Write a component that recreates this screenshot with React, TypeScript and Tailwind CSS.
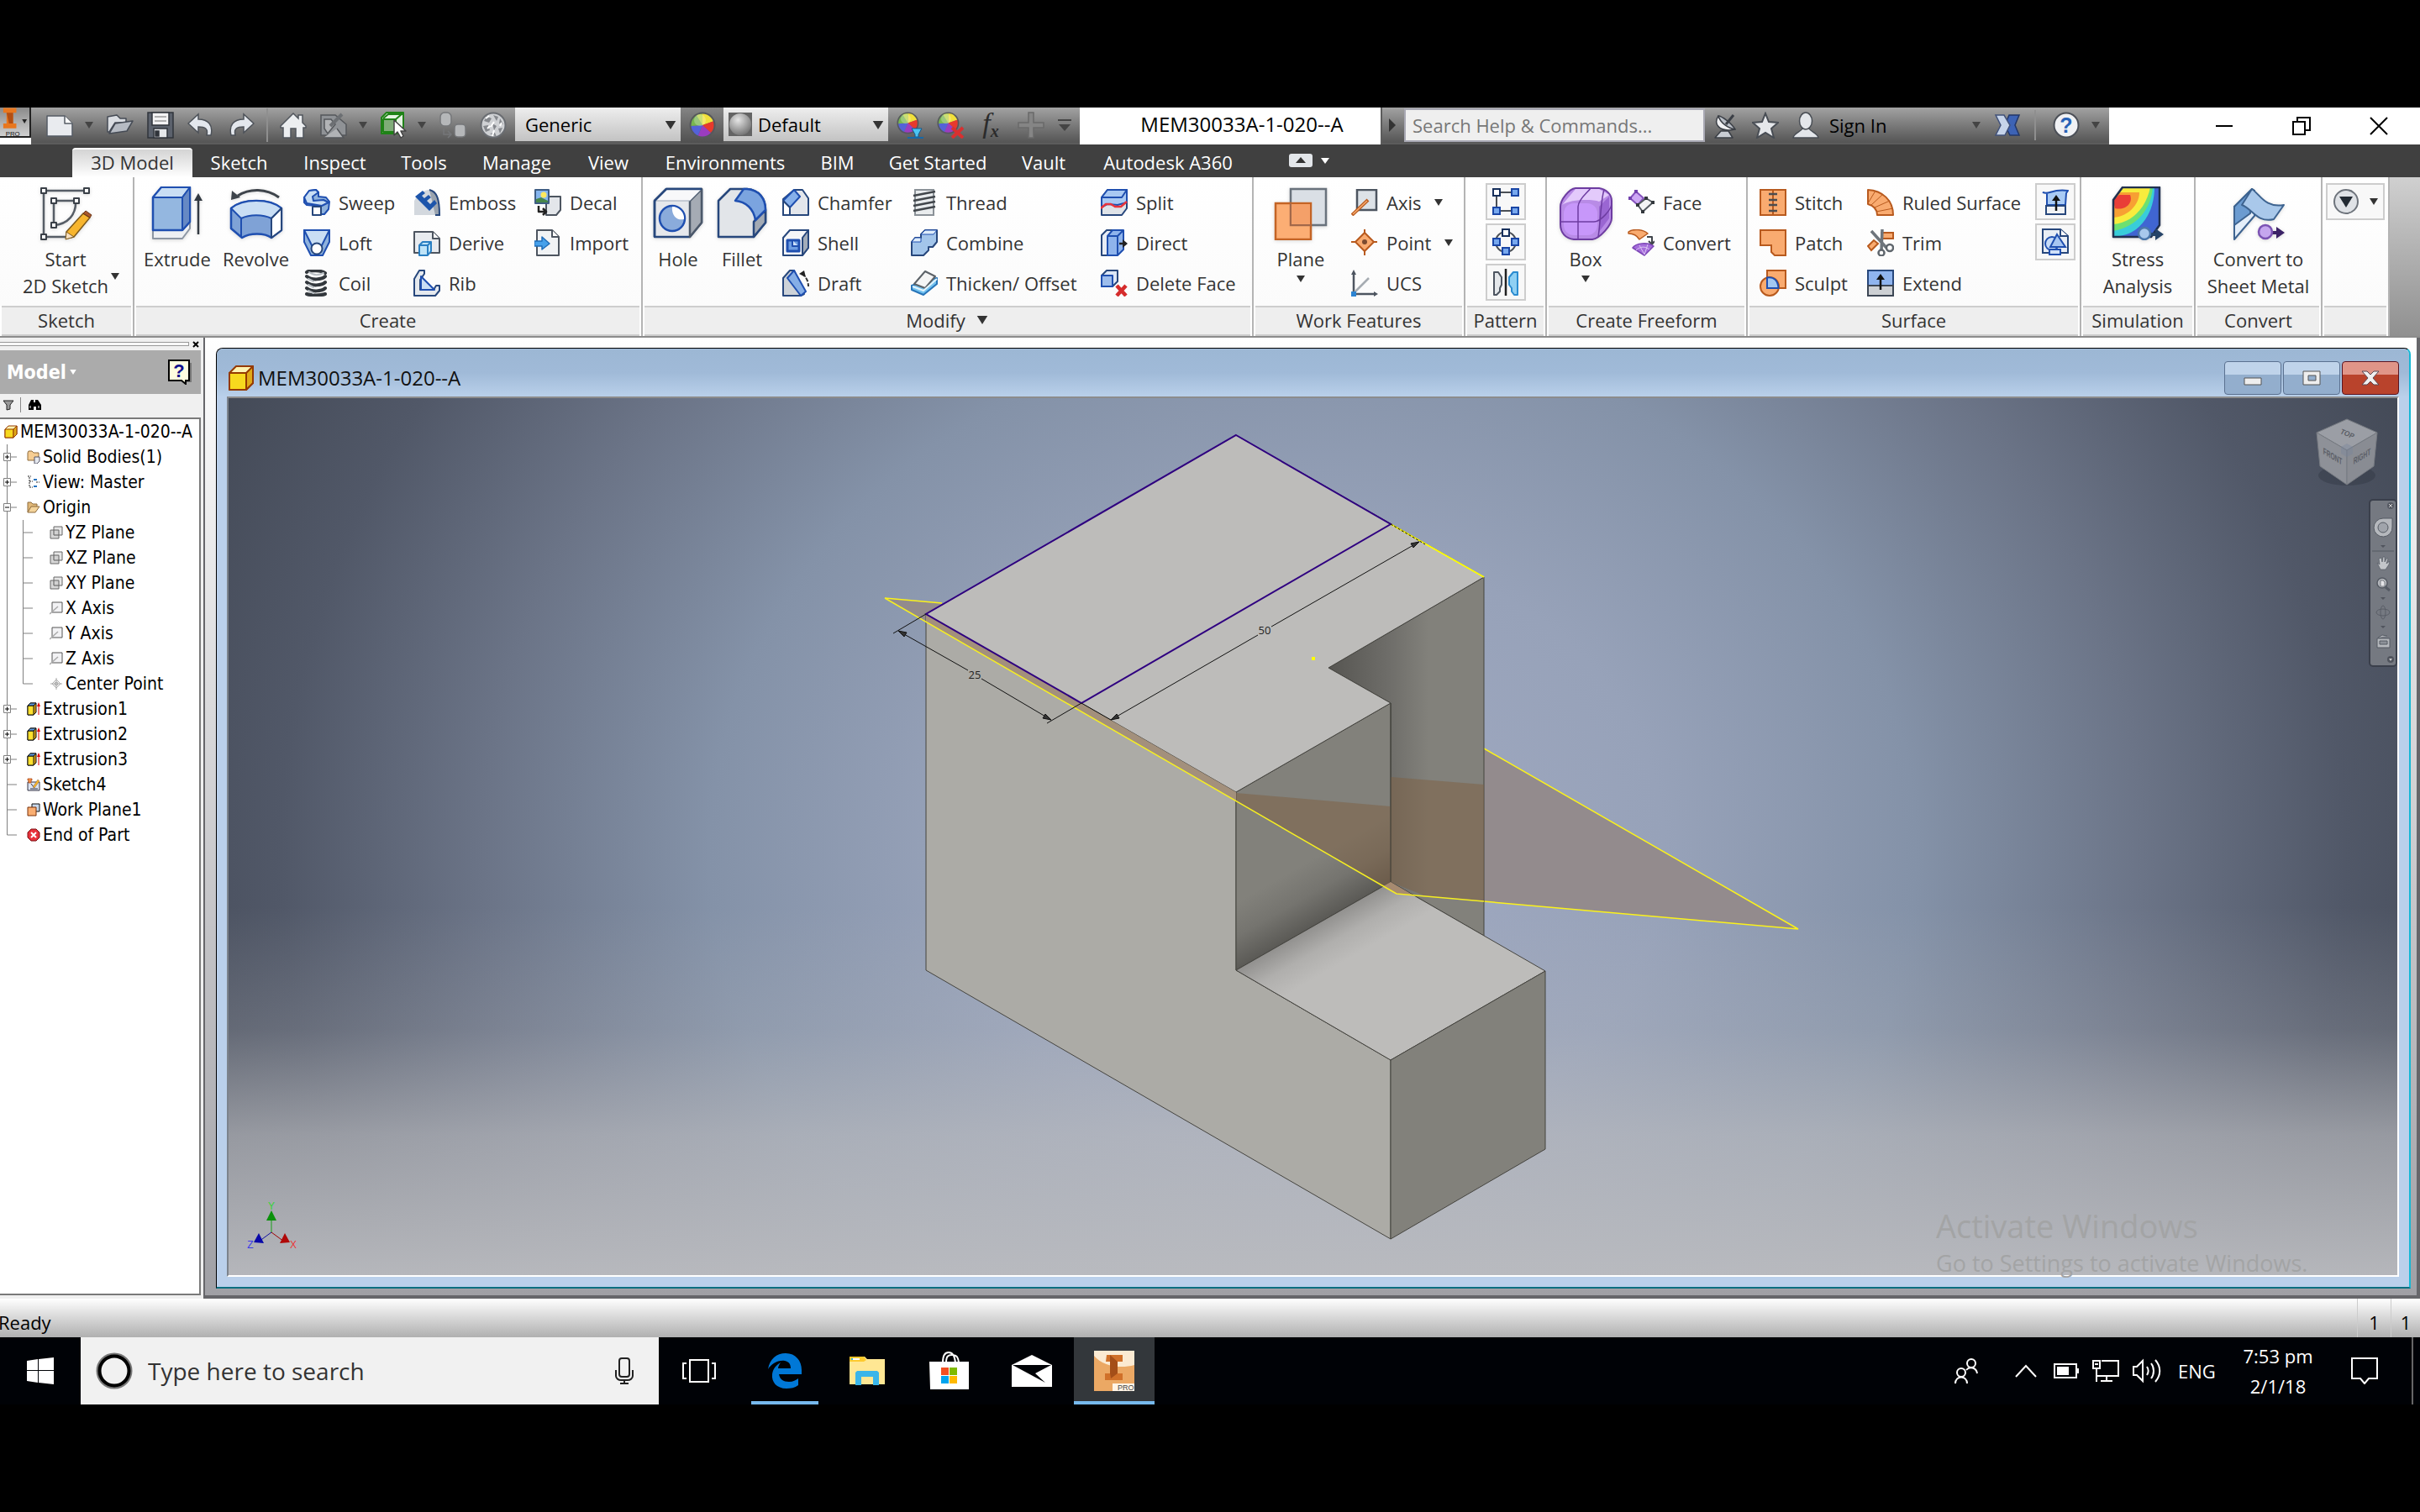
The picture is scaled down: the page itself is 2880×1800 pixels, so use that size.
import type { ReactNode } from "react";

const NAVY = "#27477c";
const BLUE = "#1f4fb0";
const SKY = "#c9def4";
const STEEL = "#8fb2dc";
const GREY = "#4d5560";
const RUST = "#b85a1e";
const PEACH = "#f9ab70";

// Small ribbon glyphs, all on a 32 x 32 grid
const glyphs: Record<string, ReactNode> = {
  sweep: (
    <g stroke={BLUE} strokeWidth="2" strokeLinejoin="round">
      <path d="M1 10 7 2 15 1 18 4 18 9 27 10 31 15 30 24 25 30 13 30 11 24 14 20 4 19 1 16Z" fill={STEEL} />
      <path d="M1 10 7 2 15 1 18 4 11 9 12 14 24 13 30 16 22 20 4 17Z" fill={SKY} />
      <path d="M11 21H21V31H11Z" fill="#fff" stroke={NAVY} />
    </g>
  ),
  loft: (
    <g stroke={BLUE} strokeWidth="2" strokeLinejoin="round">
      <path d="M1 1H31V15L23 31H9L1 15Z" fill={STEEL} />
      <path d="M1 1H31L22 19H10Z" fill={SKY} />
      <circle cx="16" cy="23" r="6.5" fill="#fff" stroke={NAVY} />
    </g>
  ),
  coil: (
    <g fill="none" stroke="#33383d" strokeWidth="4" strokeLinecap="round">
      <path d="M4 3C8 0 22 1 26 4M4 8C10 13 22 12 26 8M4 15C10 20 22 19 26 15M4 22C10 27 22 26 26 22M4 29C10 31 20 31 26 29" />
      <path d="M7 3C12 7 18 7 24 4M6 11 12 14M6 18 12 21M6 25 12 28" stroke="#b9bfc4" strokeWidth="2" />
    </g>
  ),
  emboss: (
    <g>
      <path d="M1 31V14C6 5 14 0 22 1 29 4 31 12 31 31Z" fill="#d3d8de" />
      <path d="M19 1C28 3 31 12 31 31H26" fill="#9aa3ae" stroke={NAVY} strokeWidth="2" />
      <path d="M2 9 11 2 14 5 10 8 13 11 18 7 21 10 16 14 20 18 25 13 28 17 19 26Z" fill="#1d55ab" />
    </g>
  ),
  derive: (
    <g strokeLinejoin="round" strokeWidth="2">
      <path d="M1 3H23L31 11V28H1Z" fill="#e8ebef" stroke={GREY} />
      <path d="M23 3V11H31" fill="#fff" stroke={GREY} />
      <path d="M7 19 11 15H21V26L17 31H7Z" fill="#bfe4f8" stroke="#2a7fc2" />
      <path d="M7 19H17V31M17 19 21 15" fill="none" stroke="#2a7fc2" />
    </g>
  ),
  rib: (
    <g stroke={NAVY} strokeWidth="2" strokeLinejoin="round">
      <path d="M1 11 7 1 13 1V5L8 12V24H24L27 19H31V25L26 31H1Z" fill="#e5e9ee" />
      <path d="M9 8 25 24H9Z" fill={SKY} stroke={BLUE} />
    </g>
  ),
  decal: (
    <g strokeWidth="2" strokeLinejoin="round">
      <path d="M14 13 18 9H31V25L26 31H14Z" fill="#e3e6ea" stroke={GREY} />
      <path d="M1 1H17V17H1Z" fill="#85b5ee" stroke="#3e5d84" />
      <path d="M2 12 8 10 16 14V16H2Z" fill="#47864b" />
      <circle cx="11" cy="7" r="3.5" fill="#ffe95c" />
      <path d="M5 20V27H13M10 23 14 27 10 31" fill="none" stroke="#222" strokeWidth="2.5" />
    </g>
  ),
  import: (
    <g strokeWidth="2" strokeLinejoin="round">
      <path d="M3 1H21L29 9V31H3Z" fill="#f1f3f5" stroke={GREY} />
      <path d="M21 1V9H29" fill="#fff" stroke={GREY} />
      <path d="M0 14H9V9L18 17 9 24V20H0Z" fill="#46a0ea" stroke="#1f6cb8" strokeWidth="1.5" />
    </g>
  ),
  chamfer: (
    <g strokeWidth="2" strokeLinejoin="round">
      <path d="M1 12 14 1H24L31 11V31H1Z" fill="#e3e6eb" stroke={NAVY} />
      <path d="M1 14 14 1 21 9 9 22Z" fill="#86b0ea" stroke={BLUE} />
      <path d="M1 14 9 22V31H1Z" fill="#fff" stroke={NAVY} />
    </g>
  ),
  shell: (
    <g strokeWidth="2" strokeLinejoin="round">
      <path d="M1 10 9 1H31V22L24 31H1Z" fill="#f5f6f8" stroke={NAVY} />
      <path d="M24 10 31 1V22L24 31Z" fill="#a2acb9" stroke={NAVY} />
      <path d="M6 13H20V26H6Z" fill="#6d9de2" stroke={BLUE} strokeWidth="3" />
      <path d="M12 13V20H19" fill="#cfe2fa" stroke={BLUE} />
    </g>
  ),
  draft: (
    <g strokeWidth="2" strokeLinejoin="round">
      <path d="M1 10 9 1H14L26 29 22 31H1Z" fill="#cdd2d8" stroke={NAVY} />
      <path d="M6 10 14 1 28 26 22 31Z" fill="#86aee6" stroke={BLUE} />
      <path d="M23 5C28 8 31 13 31 20" fill="none" stroke="#333" strokeDasharray="5 2" />
      <path d="M20 5 26 1 28 9Z" fill="#222" />
    </g>
  ),
  thread: (
    <g>
      <path d="M5 1H27V31H5Z" fill="#e9ecee" stroke="#8b9298" strokeWidth="2" />
      <path d="M3 8 29 3M3 14 29 9M3 20 29 15M3 26 29 21" stroke="#42474c" strokeWidth="2.5" />
    </g>
  ),
  combine: (
    <g strokeWidth="2" strokeLinejoin="round">
      <path d="M1 15 5 10H12V6L17 1H31V15L26 21H21V25L15 31H1Z" fill="#a3c5ea" stroke={NAVY} />
      <path d="M12 6 17 1H31L27 6ZM1 15 5 10H12V15Z" fill="#deecfa" stroke={BLUE} strokeWidth="1" />
    </g>
  ),
  thicken: (
    <g strokeLinejoin="round">
      <path d="M1 19 17 13 31 10V17L15 30 1 24Z" fill="#73c2f0" stroke="#2774b8" strokeWidth="2" />
      <path d="M4 17 17 2 29 8 17 22Z" fill="#f5f5f5" stroke="#5c6268" strokeWidth="2" />
      <path d="M2 20 15 25 31 11" fill="none" stroke="#e5f4fc" strokeWidth="2" />
    </g>
  ),
  split: (
    <g strokeWidth="2" strokeLinejoin="round">
      <path d="M1 10 8 1H31V23L25 31H1Z" fill="#dfe3e8" stroke={NAVY} />
      <path d="M1 10 8 1H31V16L20 19 8 18 1 22Z" fill="#a9c9f2" stroke={BLUE} />
      <path d="M1 10H25L31 1" fill="none" stroke={BLUE} />
      <path d="M0 23 6 18 12 18 17 21 24 21 31 15" fill="none" stroke="#e8343c" strokeWidth="2.5" />
    </g>
  ),
  direct: (
    <g strokeWidth="2" strokeLinejoin="round">
      <path d="M1 7 7 1H14V31H1Z" fill="#e7ecf4" stroke={NAVY} />
      <path d="M8 8 14 1H27V24L20 31H8Z" fill="#8fb4ec" stroke={BLUE} />
      <path d="M8 8H20L27 1M20 8V31" fill="none" stroke={BLUE} />
      <path d="M22 17H30" stroke="#222" strokeWidth="2.5" />
      <path d="M26 12 32 17 26 22Z" fill="#222" />
    </g>
  ),
  deleteFace: (
    <g strokeLinejoin="round">
      <path d="M1 7 7 1H20V14L14 20H1Z" fill="#dbe6f5" stroke={NAVY} strokeWidth="2" />
      <path d="M1 7H14V20H1Z" fill="#9dbdec" stroke={BLUE} strokeWidth="2" />
      <path d="M19 19 30 31M30 19 19 31" stroke="#d52c2c" strokeWidth="4.5" />
    </g>
  ),
  axis: (
    <g>
      <path d="M7 1H30V25H7Z" fill="#dde2e7" stroke={GREY} strokeWidth="2.5" />
      <path d="M1 31 20 13" stroke={RUST} strokeWidth="4" />
      <path d="M2 30 19 14" stroke={PEACH} strokeWidth="1.5" />
    </g>
  ),
  point: (
    <g>
      <path d="M16 0V31M0 15H31" stroke={RUST} strokeWidth="2" />
      <path d="M16 4 27 15 16 26 5 15Z" fill={PEACH} stroke={RUST} strokeWidth="2" />
      <circle cx="16" cy="15" r="3" fill="#7b4b30" />
    </g>
  ),
  ucs: (
    <g fill="none" stroke={GREY} strokeWidth="2.5">
      <path d="M3 28V4M4 29H29" />
      <path d="M4 27 21 10" stroke="#a6acb2" />
      <path d="M0 6 3 0 6 6ZM27 26 32 29 27 32Z" fill={GREY} stroke="none" />
      <path d="M0 26H6V32H0Z" fill="#2c84d2" stroke="none" />
    </g>
  ),
  rectPattern: (
    <g>
      <path d="M5 5H27M5 5V27M5 27H27" stroke="#4a4f55" strokeWidth="2" fill="none" />
      <path d="M1 1H9V9H1Z" fill="#fff" stroke="#17305c" strokeWidth="2" />
      <path d="M23 1H31V9H23ZM1 23H9V31H1ZM23 23H31V31H23Z" fill="#77a8ee" stroke="#1a46a6" strokeWidth="2" />
    </g>
  ),
  circPattern: (
    <g>
      <circle cx="16" cy="16" r="12" fill="none" stroke="#4a4f55" strokeWidth="2" />
      <path d="M12 1H20V9H12Z" fill="#fff" stroke="#17305c" strokeWidth="2" />
      <path d="M1 12H9V20H1ZM23 12H31V20H23ZM12 23H20V31H12Z" fill="#77a8ee" stroke="#1a46a6" strokeWidth="2" />
    </g>
  ),
  mirror: (
    <g strokeLinejoin="round" strokeWidth="2">
      <path d="M2 4H7L11 10V19L9 23V27L5 31H2Z" fill="#e4e7ea" stroke={GREY} />
      <path d="M30 4H25L20 10V19L23 23V27L26 31H30Z" fill="#8fd0f3" stroke="#2b8cd0" />
      <path d="M16 0V32" stroke="#222" strokeWidth="2.5" />
    </g>
  ),
  face: (
    <g strokeWidth="2" strokeLinejoin="round">
      <path d="M10 3 19 11 12 19 3 11Z" fill="#cda7f4" stroke="#8553bd" />
      <path d="M22 11 30 16 18 27 12 19Z" fill="#f3f4f5" stroke="#555b62" />
      <path d="M8 1H12V5H8ZM1 9H5V13H1Z" fill="#7140ad" />
      <path d="M28 14H32V18H28ZM16 25H20V29H16ZM20 9H24V13H20ZM10 17H14V21H10Z" fill="#33383d" />
    </g>
  ),
  convert: (
    <g strokeLinejoin="round">
      <path d="M1 3C7-1 18 0 24 5L14 12C11 7 6 5 1 5Z" fill={PEACH} stroke={RUST} strokeWidth="1.5" />
      <path d="M23 9H29V17M25 14 29 18 32 14" fill="none" stroke="#3f444a" strokeWidth="2" />
      <path d="M6 22C10 16 24 15 31 20L20 31Z" fill="#a56ddb" stroke="#7b45b5" strokeWidth="1.5" />
      <path d="M10 25C15 20 21 20 26 24M14 19 20 30M24 18 20 30" fill="none" stroke="#dcc3f3" />
    </g>
  ),
  stitch: (
    <g>
      <path d="M1 1H31V31H1Z" fill={PEACH} stroke={RUST} strokeWidth="2" />
      <path d="M16 1V31" stroke={RUST} strokeWidth="2" />
      <path d="M11 6H21M11 13H21M11 19H21M11 26H21" stroke="#4b4d50" strokeWidth="2.5" />
    </g>
  ),
  patch: <path d="M1 1H31V31H18L14 27V19H1Z" fill={PEACH} stroke={RUST} strokeWidth="2" />,
  sculpt: (
    <g strokeWidth="2">
      <path d="M9 1H31V22H9Z" fill={PEACH} stroke={RUST} />
      <circle cx="12" cy="20" r="11" fill={PEACH} stroke={RUST} />
      <path d="M9 9.5C17 8 22 13 22.5 22H9Z" fill="#a3c8f2" stroke={BLUE} />
    </g>
  ),
  ruled: (
    <g stroke={RUST} strokeWidth="2" strokeLinejoin="round">
      <path d="M1 1C18 2 31 13 31 31H12C12 25 8 20 1 18Z" fill={PEACH} />
      <path d="M1 17 10 2M5 19 19 6M9 22 27 14M11 27 31 23" strokeWidth="1" />
    </g>
  ),
  trim: (
    <g>
      <path d="M1 20 8 13 13 17 5 25ZM17 4H31V11H17Z" fill={PEACH} stroke={RUST} strokeWidth="2" />
      <path d="M5 2 24 23M18 0 17 26" stroke="#6e757c" strokeWidth="3.5" />
      <circle cx="27" cy="22" r="4" fill="#fff" stroke="#5f666d" strokeWidth="2.5" />
      <circle cx="17" cy="28" r="3.5" fill="#fff" stroke="#5f666d" strokeWidth="2.5" />
    </g>
  ),
  extend: (
    <g strokeWidth="2">
      <path d="M1 1H31V31H1Z" fill="#8fb4ee" stroke={NAVY} />
      <path d="M1 19H31V31H1Z" fill="#cdd0d4" stroke="#3c4654" />
      <path d="M16 24V8" stroke="#111" strokeWidth="2.5" />
      <path d="M11 12 16 5 21 12Z" fill="#111" />
    </g>
  ),
  replaceFace: (
    <g strokeWidth="2">
      <path d="M1 5C8 9 12 0 31 3L29 6 28 20H6V6Z" fill="#a9cbf5" stroke={BLUE} />
      <path d="M5 21H28V31H5Z" fill="#f0f2f4" stroke={NAVY} />
      <path d="M17 27V11" stroke="#111" strokeWidth="2.5" />
      <path d="M12 15 17 8 22 15Z" fill="#111" />
    </g>
  ),
  repair: (
    <g strokeWidth="2">
      <path d="M1 1H22L31 9V29H1Z" fill="#e8edf5" stroke={NAVY} />
      <path d="M22 1V9H31" fill="#fff" stroke={NAVY} />
      <circle cx="12" cy="18" r="8" fill="#c8dcf8" stroke={BLUE} />
      <path d="M18 7 28 22H10Z" fill="#a7c6f2" stroke={BLUE} />
      <path d="M9 25H22V31H9Z" fill="#cfe0f8" stroke={BLUE} />
    </g>
  ),
  newFile: (
    <g strokeLinejoin="round">
      <path d="M1 5H22L31 14V29H1Z" fill="#e9ebef" stroke="#565c66" strokeWidth="1.5" />
      <path d="M22 5V14H31" fill="#fff" stroke="#565c66" strokeWidth="1.5" />
    </g>
  ),
  openFile: (
    <g stroke="#454b55" strokeWidth="1.5" strokeLinejoin="round">
      <path d="M1 6 12 4 16 8H23V13H10L3 24H1Z" fill="#dadde2" />
      <path d="M10 14 31 11 24 23 3 26Z" fill="#b6bbc3" />
    </g>
  ),
  save: (
    <g stroke="#30343b" strokeWidth="1.5">
      <path d="M1 1H31V31H1Z" fill="#5b616c" />
      <path d="M6 1H26V16H6Z" fill="#f3f3f4" />
      <path d="M9 6H23M9 11H23" stroke="#999" />
      <path d="M8 20H24V31H8Z" fill="#e5e7ea" />
      <path d="M10 23H14V29H10Z" fill="#30343b" />
    </g>
  ),
  undo: <path d="M1 14 13 3V9C25 9 31 16 28 28H23C25 20 21 18 13 18V25Z" fill="#e3e7ed" stroke="#4d5259" strokeWidth="1.5" />,
  redo: <path d="M31 14 19 3V9C7 9 1 16 4 28H9C7 20 11 18 19 18V25Z" fill="#e3e7ed" stroke="#4d5259" strokeWidth="1.5" />,
  home: <path d="M1 17 16 2 22 8V4H27V13L31 17V19H28V31H19V20H13V31H4V19H1Z" fill="#eceef0" stroke="#50555c" strokeWidth="1.5" />,
  sketchOff: (
    <g fill="#8f9296" stroke="#54575b" strokeWidth="1.5">
      <path d="M1 4H18L31 15V28H1Z" />
      <path d="M5 9H13L18 15 9 26 5 20ZM4 31H28L20 20" fill="#b1b3b6" />
      <path d="M12 17 26 3" stroke="#6c6f73" strokeWidth="4" />
    </g>
  ),
  select: (
    <g stroke="#1f8217" strokeWidth="2" strokeLinejoin="round">
      <path d="M1 7 7 1H27V19L20 26H1Z" fill="#e4f3e2" />
      <path d="M3 9H18V24H3Z" fill="#7fac78" />
      <path d="M18 9 26 2M3 8 9 3H27" fill="none" />
      <path d="M16 10V28L20 24 24 31 27 29 24 23H30Z" fill="#fff" stroke="#444" strokeWidth="1.5" />
    </g>
  ),
  bodies: (
    <g fill="#b5b7b9" stroke="#75777a" strokeWidth="1.5">
      <rect x="1" y="1" width="13" height="16" rx="5" />
      <path d="M5 20V27H13M10 23 14 27 10 31" fill="none" />
      <rect x="18" y="15" width="13" height="15" rx="4" />
    </g>
  ),
  globe: (
    <g>
      <circle cx="16" cy="16" r="14.5" fill="#cfd1d4" stroke="#6a6d72" strokeWidth="2" />
      <path d="M8 5 14 8 11 13 5 11M16 4 22 6 20 11M24 8 28 15 23 14M4 17 10 16 12 22 7 24M15 14 20 17 17 22M22 20 27 19 24 26M12 26 18 25 20 30" fill="#85888d" />
      <path d="M7 8 11 5M13 18 17 12M24 17 26 13M15 29 17 22M9 20 12 17" stroke="#fff" strokeWidth="2" />
    </g>
  ),
  wheel: (
    <g stroke="none">
      <path d="M16 16V1A15 15 0 0 1 30 11Z" fill="#f1e03a" />
      <path d="M16 16 30 11A15 15 0 0 1 27 26Z" fill="#e8392c" />
      <path d="M16 16 27 26A15 15 0 0 1 10 30Z" fill="#9b3cc0" />
      <path d="M16 16 10 30A15 15 0 0 1 1 17Z" fill="#5462d8" />
      <path d="M16 16 1 17A15 15 0 0 1 8 3Z" fill="#78b650" />
      <path d="M16 16 8 3A15 15 0 0 1 16 1Z" fill="#b9d644" />
      <circle cx="16" cy="16" r="14.5" fill="none" stroke="#56585d" strokeWidth="2" />
      <circle cx="13" cy="10" r="7" fill="#fff" opacity=".25" />
    </g>
  ),
  plus: <path d="M13 1H19V13H31V19H19V31H13V19H1V13H13Z" fill="#858585" stroke="#6a6a6a" strokeWidth="1.5" />,
  dish: (
    <g stroke="#3b3f46" strokeWidth="1.5" strokeLinejoin="round">
      <path d="M4 31 11 23 20 23 25 31Z" fill="#c9cdd3" />
      <path d="M8 5C2 14 8 25 28 21C20 19 11 12 8 5Z" fill="#f0f1f3" />
      <path d="M8 5C12 5 24 14 28 21 20 20 10 13 8 5Z" fill="#b9bec6" />
      <path d="M17 15 26 4" strokeWidth="3" />
    </g>
  ),
  star: <path d="M16 2 20 12 31 13 23 20 26 31 16 25 6 31 9 20 1 13 12 12Z" fill="#e5e7ea" stroke="#484d54" strokeWidth="2" />,
  person: (
    <g fill="#e3e6ea" stroke="#484d54" strokeWidth="1.5">
      <path d="M1 31C2 25 10 24 12 20H20C22 24 30 25 31 31Z" />
      <ellipse cx="16" cy="11" rx="7.5" ry="10" />
    </g>
  ),
  exchange: (
    <g strokeWidth="1.5">
      <path d="M18 4H30L25 16 30 28H19L13 16Z" fill="#3d63b5" stroke="#22376a" />
      <path d="M2 4H12L19 16 13 28H2L8 16Z" fill="#c6d4ea" stroke="#41517a" />
    </g>
  ),
};

function Glyph({ name, className = "size-8" }: { name: string; className?: string }) {
  return (
    <svg viewBox="0 0 32 32" className={`${className} shrink-0`} aria-hidden="true">
      {glyphs[name]}
    </svg>
  );
}

// Large ribbon drawings, 64 x 64 grid
const drawings: Record<string, ReactNode> = {
  start2d: (
    <g fill="none" strokeLinejoin="round">
      <path d="M6 5H56M6 5V60H40" stroke="#565d66" strokeWidth="2.5" />
      <path d="M18 17H44C45 33 35 45 18 46Z" stroke="#565d66" strokeWidth="2.5" />
      <path d="M3 2H9V8H3ZM54 2H60V8H54ZM3 57H9V63H3ZM15 14H21V20H15ZM42 14H48V20H42ZM15 43H21V49H15Z" fill="#fff" stroke="#3a4048" strokeWidth="2" />
      <path d="M33 54 53 32 61 37 42 60 33 62Z" fill="#f7b52e" stroke="#7e5a1b" strokeWidth="1.5" />
      <path d="M53 32 56 29 63 34 61 37Z" fill="#a9582b" stroke="#6b3517" />
      <path d="M33 54 32 63 42 60Z" fill="#f6dfc0" stroke="#7e5a1b" />
    </g>
  ),
  extrude: (
    <g strokeLinejoin="round">
      <path d="M3 52H38L47 42V50L38 62H3Z" fill="#eef0f3" stroke="#8c96a3" strokeWidth="2" />
      <path d="M3 13 13 1H47V42L38 52H3Z" fill="#94b7e0" stroke={BLUE} strokeWidth="2.5" />
      <path d="M3 13 13 1H47L38 13Z" fill={SKY} stroke={BLUE} strokeWidth="2" />
      <path d="M38 13 47 1V42L38 52Z" fill="#6689c4" stroke={BLUE} strokeWidth="2" />
      <path d="M57 57V14" stroke="#333a42" strokeWidth="2.5" />
      <path d="M52 17 57 8 62 17Z" fill="#333a42" />
    </g>
  ),
  revolve: (
    <g strokeLinejoin="round">
      <path d="M2 26C16 14 48 14 62 26V52L50 61C42 55 24 55 15 61L2 50Z" fill="#7fa2d6" stroke={BLUE} strokeWidth="2.5" />
      <path d="M2 26C16 14 48 14 62 26L50 38C40 33 24 33 14 38Z" fill={SKY} stroke={BLUE} strokeWidth="2" />
      <path d="M50 38 62 26V52L50 61Z" fill="#fff" stroke={NAVY} strokeWidth="2" />
      <path d="M14 38V60" stroke={BLUE} strokeWidth="2" />
      <path d="M10 11C24 2 44 2 59 13" fill="none" stroke="#3e444b" strokeWidth="3" />
      <path d="M2 16 3 5 13 13Z" fill="#3e444b" />
    </g>
  ),
  hole: (
    <g stroke={NAVY} strokeWidth="2.5" strokeLinejoin="round">
      <path d="M4 17 18 3H60V43L46 60H4Z" fill="#e6e8ec" />
      <path d="M46 17 60 3V43L46 60Z" fill="#a5abb4" stroke="#4c5869" />
      <path d="M4 17 18 3H60L46 17Z" fill="#f8f8fa" stroke="#9aa5b4" strokeWidth="1" />
      <path d="M4 60V17L18 3H60" fill="none" />
      <circle cx="25" cy="38" r="15" fill="#8aabdb" stroke={BLUE} />
      <path d="M25 24A14 14 0 0 1 39 39C30 41 24 34 25 24Z" fill="#fff" stroke="none" />
    </g>
  ),
  fillet: (
    <g stroke={NAVY} strokeWidth="2.5" strokeLinejoin="round">
      <path d="M4 17 18 3H38C52 4 60 14 60 28V43L46 60H4Z" fill="#e2e5e9" />
      <path d="M46 42 60 28V43L46 60Z" fill="#a3aab4" />
      <path d="M24 17 34 3H38C52 4 60 14 60 28L48 40C46 27 37 18 24 17Z" fill="#7ba4df" stroke={BLUE} />
    </g>
  ),
  plane: (
    <g strokeWidth="2.5">
      <path d="M20 3H62V46H20Z" fill="#dadfe5" stroke="#69727c" />
      <path d="M2 20H44V63H2Z" fill="#fcae74" stroke="#c46425" />
      <path d="M20 20V46H44" fill="none" stroke="#a2684a" />
      <path d="M21 21H43V45H21Z" fill="#f4a069" />
    </g>
  ),
  box: (
    <g strokeLinejoin="round">
      <path d="M20 2H48C56 3 63 9 63 17V38C63 46 49 62 40 63H18C8 62 2 55 2 45V24C2 16 12 3 20 2Z" fill="#b88be6" stroke="#6d3ca1" strokeWidth="2" />
      <path d="M20 3H48L60 10 48 18C40 15 14 15 4 22Z" fill="#e3cafb" />
      <rect x="6" y="20" width="40" height="38" rx="12" fill="#c797fa" />
      <path d="M48 24 60 12V38L48 54Z" fill="#9a66d2" />
      <path d="M2 42H42C50 42 62 28 63 21M23 63V24C24 14 34 8 38 2M47 60C50 40 50 16 54 4" fill="none" stroke="#6d3ca1" strokeWidth="1.5" />
    </g>
  ),
  stress: (
    <g strokeLinejoin="round">
      <path d="M3 16 14 1H58V46L48 60H3Z" fill="#4065d2" />
      <path d="M3 16 14 1H52C52 30 36 56 10 59H3Z" fill="#38cdda" />
      <path d="M3 16 14 1H50C48 26 32 48 3 53Z" fill="#6de070" />
      <path d="M3 16 14 1H47C42 24 28 42 3 45Z" fill="#f8ec3d" />
      <path d="M3 16 11 7H34C34 22 20 36 3 37Z" fill="#f7a033" />
      <path d="M3 16 10 10H23C27 20 17 29 5 26Z" fill="#e93d37" />
      <path d="M3 16 14 1H58V46L48 60H3Z" fill="none" stroke="#21304f" strokeWidth="2.5" />
      <path d="M42 55H53V50L63 57 53 64V59H42Z" fill="#264468" />
      <circle cx="40" cy="56" r="7" fill="#a8c8ec" stroke="#4b77ab" strokeWidth="2.5" />
    </g>
  ),
  sheet: (
    <g strokeLinejoin="round" strokeWidth="2">
      <path d="M3 24 24 3 27 5V35L3 63Z" fill="#e4eef9" stroke="#3d6390" />
      <path d="M3 24 24 3 27 5 22 22 22 32 3 46Z" fill="#6b9bd0" stroke="#3d6390" />
      <path d="M24 3C34 10 40 26 62 22L50 39C30 44 24 26 12 22Z" fill="#a9c8ea" stroke="#3d6390" />
      <path d="M42 53H53V48L63 55 53 62V57H42Z" fill="#3b2266" />
      <circle cx="40" cy="54" r="8" fill="#c5a6ee" stroke="#7b52b3" strokeWidth="2.5" />
    </g>
  ),
};

function Caret({ className = "h-2 w-2.5 text-[#333]" }: { className?: string }) {
  return (
    <svg viewBox="0 0 10 8" className={`${className} shrink-0`} aria-hidden="true">
      <path d="M0 0H10L5 8Z" fill="currentColor" />
    </svg>
  );
}

function BigTool({ art, lines, className, caret }: { art: string; lines: string[]; className: string; caret?: boolean }) {
  return (
    <button className={`flex flex-col items-center pt-[11px] ${className}`}>
      <svg viewBox="0 0 64 64" className="mb-1.5 size-16 drop-shadow-sm" aria-hidden="true">
        {drawings[art]}
      </svg>
      {lines.map((line) => (
        <span key={line} className="whitespace-nowrap leading-8">{line}</span>
      ))}
      {caret && <Caret className="mt-1 h-2 w-2.5 text-[#333]" />}
    </button>
  );
}

function SmallTool({ icon, label, caret }: { icon: string; label: string; caret?: boolean }) {
  return (
    <button className="flex h-12 items-center gap-2.5 whitespace-nowrap">
      <Glyph name={icon} />
      {label}
      {caret && <Caret className="ml-1.5 h-2 w-2.5 text-[#333]" />}
    </button>
  );
}

function Column({ className = "", items }: { className?: string; items: [string, string, boolean?][] }) {
  return (
    <div className={`flex shrink-0 flex-col items-start pt-1.5 ${className}`}>
      {items.map(([icon, label, caret]) => (
        <SmallTool key={label} icon={icon} label={label} caret={caret} />
      ))}
    </div>
  );
}

function BoxedTool({ icon, label }: { icon: string; label: string }) {
  return (
    <button aria-label={label} className="flex h-11 w-12 items-center justify-center border-2 border-[#cdcdcd] bg-[#f8f8f8]">
      <Glyph name={icon} />
    </button>
  );
}

function Panel({ label, className, children, caret }: { label: string; className: string; children: ReactNode; caret?: boolean }) {
  return (
    <section className={`flex shrink-0 flex-col border-r-2 border-[#b4b4b4] ${className}`}>
      <div className="flex h-[153px] bg-gradient-to-b from-white to-[#fbfbfb]">{children}</div>
      <div className="mx-0.5 flex h-9 items-center justify-center gap-3 whitespace-nowrap border-y-2 border-[#cdcdcd] bg-[#eeeeee] pb-0.5">
        {label}
        {caret && <Caret className="h-2.5 w-4 text-[#333]" />}
      </div>
    </section>
  );
}

function QuickButton({ icon, label, className = "" }: { icon: string; label: string; className?: string }) {
  return (
    <button aria-label={label} className={`flex shrink-0 ${className}`}>
      <Glyph name={icon} />
    </button>
  );
}

function TitleBar() {
  return (
    <header className="flex h-11 bg-white">
      <button aria-label="Application menu" className="flex h-9 w-[37px] shrink-0 items-start border-b-2 border-r-2 border-[#222] bg-gradient-to-b from-[#8a8a8a] to-[#d0d0d0]">
        <svg viewBox="0 0 36 36" className="h-9 w-9">
          <path d="M4 0H20V6H16V19H20V25H4V19H8V6H4Z" fill="#e8771f" />
          <path d="M8 6H16V19H11Z" fill="#b34e12" />
          <path d="M27 14H33L30 19Z" fill="#222" />
          <text x="7" y="34" fontFamily="Liberation Sans" fontSize="8" fill="#111">PRO</text>
        </svg>
      </button>
      <div className="flex h-11 w-[576px] shrink-0 items-center border-b-2 border-[#5c5c5c] bg-gradient-to-b from-[#a2a2a2] to-[#555] pl-[18px]">
        <QuickButton icon="newFile" label="New" />
        <Caret className="ml-3.5 h-2 w-2.5 text-[#444]" />
        <QuickButton icon="openFile" label="Open" className="ml-4" />
        <QuickButton icon="save" label="Save" className="ml-4" />
        <QuickButton icon="undo" label="Undo" className="ml-4" />
        <QuickButton icon="redo" label="Redo" className="ml-4" />
        <span className="ml-3.5 h-10 w-0.5 shrink-0 bg-[#8f8f8f]" />
        <QuickButton icon="home" label="Home" className="ml-3.5" />
        <QuickButton icon="sketchOff" label="Sketch" className="ml-4" />
        <Caret className="ml-3.5 h-2 w-2.5 text-[#444]" />
        <QuickButton icon="select" label="Select" className="ml-4" />
        <Caret className="ml-3 h-2 w-2.5 text-[#444]" />
        <QuickButton icon="bodies" label="Bodies" className="ml-4" />
        <QuickButton icon="globe" label="Material" className="ml-4" />
      </div>
      <div className="relative h-11 w-[197px] shrink-0 border-b-4 border-[#5c5c5c]">
        <select aria-label="Material" className="h-full w-full appearance-none bg-gradient-to-b from-[#eeeeee] to-[#c3c3c3] pl-3 text-black">
          <option>Generic</option>
        </select>
        <Caret className="pointer-events-none absolute right-1 top-4 h-2.5 w-4 text-[#333]" />
      </div>
      <div className="flex h-11 w-[51px] shrink-0 items-center justify-center border-b-2 border-[#5c5c5c] bg-gradient-to-b from-[#858585] to-[#505050]">
        <QuickButton icon="wheel" label="Appearance" />
      </div>
      <div className="relative h-11 w-[196px] shrink-0 border-b-4 border-[#5c5c5c]">
        <select aria-label="Appearance" className="h-full w-full appearance-none bg-gradient-to-b from-[#eeeeee] to-[#c3c3c3] pl-[41px] text-black">
          <option>Default</option>
        </select>
        <svg viewBox="0 0 28 28" className="pointer-events-none absolute left-1.5 top-1.5 size-7">
          <defs>
            <radialGradient id="ball" cx=".4" cy=".3" r=".7">
              <stop offset="0" stopColor="#e6e6e6" />
              <stop offset="1" stopColor="#777" />
            </radialGradient>
          </defs>
          <path d="M0 0H28V28H0Z" fill="#646464" />
          <circle cx="14" cy="14" r="13" fill="url(#ball)" />
        </svg>
        <Caret className="pointer-events-none absolute right-1 top-4 h-2.5 w-4 text-[#333]" />
      </div>
      <div className="flex h-11 w-[228px] shrink-0 items-center gap-4 border-b-2 border-[#5c5c5c] bg-gradient-to-b from-[#a2a2a2] to-[#555] pl-2.5">
        <button aria-label="Adjust appearance" className="shrink-0">
          <svg viewBox="0 0 32 32" className="size-8">
            <g transform="scale(.84)">{glyphs.wheel}</g>
            <path d="M18 20H30L26 27V30H22V27Z" fill="#4cc4f2" stroke="#12588f" />
            <path d="M13 31H32" stroke="#1768a8" strokeWidth="2" />
          </svg>
        </button>
        <button aria-label="Clear appearance" className="shrink-0">
          <svg viewBox="0 0 32 32" className="size-8">
            <g transform="scale(.84)">{glyphs.wheel}</g>
            <path d="M18 19 31 31M31 19 18 31" stroke="#d83030" strokeWidth="4" />
          </svg>
        </button>
        <button aria-label="Parameters" className="w-8 shrink-0 pb-1 font-['Liberation_Serif',serif] text-[34px] italic leading-8 text-[#2b2b2b]">
          f<sub className="text-[20px] font-bold">x</sub>
        </button>
        <QuickButton icon="plus" label="Add" />
        <svg viewBox="0 0 16 14" className="h-3.5 w-4 shrink-0">
          <path d="M0 1H16" stroke="#444" strokeWidth="2" />
          <path d="M1 6H15L8 14Z" fill="#444" />
        </svg>
      </div>
      <h1 className="flex min-w-0 flex-1 items-center justify-center pb-1 pl-7 text-2xl text-black">MEM30033A-1-020--A</h1>
      <div className="flex h-11 w-[867px] shrink-0 items-center border-b-2 border-l-2 border-[#5c5c5c] bg-gradient-to-b from-[#a2a2a2] to-[#555] text-black">
        <svg viewBox="0 0 8 16" className="ml-2 h-4 w-2 shrink-0">
          <path d="M0 0V16L8 8Z" fill="#333" />
        </svg>
        <input
          aria-label="Search help"
          placeholder="Search Help & Commands..."
          className="ml-2.5 h-10 w-[358px] shrink-0 border-2 border-[#a9a9b4] bg-[#efefef] px-2 placeholder:text-[#777]"
        />
        <QuickButton icon="dish" label="Communication center" className="ml-2" />
        <QuickButton icon="star" label="Favorites" className="ml-4" />
        <QuickButton icon="person" label="Account" className="ml-4" />
        <a href="#signin" className="ml-3 w-[170px]">Sign In</a>
        <Caret className="h-2 w-2.5 text-[#444]" />
        <QuickButton icon="exchange" label="Exchange apps" className="ml-4" />
        <span className="ml-4 h-9 w-0.5 bg-[#8f8f8f]" />
        <button aria-label="Help" className="ml-5">
          <svg viewBox="0 0 32 32" className="size-8">
            <circle cx="16" cy="16" r="14.5" fill="#f0f1f4" stroke="#4b4f57" strokeWidth="2" />
            <text x="16" y="25" textAnchor="middle" fontFamily="Liberation Sans" fontWeight="700" fontSize="25" fill="#2862b7">?</text>
          </svg>
        </button>
        <Caret className="ml-3.5 h-2 w-2.5 text-[#444]" />
      </div>
      <div className="flex h-11 w-[370px] shrink-0 items-center bg-white pl-[126px]">
        <button aria-label="Minimize">
          <svg viewBox="0 0 22 22" className="size-[22px]"><path d="M1 11H21" stroke="#000" strokeWidth="2" /></svg>
        </button>
        <button aria-label="Restore" className="ml-[70px]">
          <svg viewBox="0 0 22 22" className="size-[22px]">
            <path d="M1 6H15V21H1ZM6 6V1H21V16H15" fill="none" stroke="#000" strokeWidth="2" />
          </svg>
        </button>
        <button aria-label="Close" className="ml-[70px]">
          <svg viewBox="0 0 22 22" className="size-[22px]"><path d="M1 1 21 21M21 1 1 21" stroke="#000" strokeWidth="2" /></svg>
        </button>
      </div>
    </header>
  );
}

const tabs: [string, string][] = [
  ["Sketch", "w-[111px]"],
  ["Inspect", "w-[117px]"],
  ["Tools", "w-[95px]"],
  ["Manage", "w-[126px]"],
  ["View", "w-[92px]"],
  ["Environments", "w-[186px]"],
  ["BIM", "w-[81px]"],
  ["Get Started", "w-[158px]"],
  ["Vault", "w-[94px]"],
  ["Autodesk A360", "w-[202px]"],
];

function TabBar() {
  return (
    <nav className="flex h-[39px] items-end bg-[#404040] pl-[86px] text-white">
      <button className="h-[35px] w-[143px] rounded-t border-t-2 border-white bg-gradient-to-b from-[#d4d4d4] to-white pb-1 text-[#333]">3D Model</button>
      {tabs.map(([name, width]) => (
        <button key={name} className={`h-[35px] shrink-0 whitespace-nowrap pb-0.5 ${width}`}>{name}</button>
      ))}
      <button aria-label="Collapse ribbon" className="mb-3 ml-[43px]">
        <svg viewBox="0 0 50 16" className="h-4 w-[50px]">
          <rect width="28" height="16" rx="3" fill="#e3e6ea" />
          <path d="M8 11 14 4 20 11Z" fill="#333" />
          <path d="M38 5H48L43 12Z" fill="#fff" />
        </svg>
      </button>
    </nav>
  );
}

function Ribbon() {
  return (
    <div className="flex h-[191px] items-start border-b-2 border-[#8c8c8c] bg-gradient-to-b from-[#d0d0d0] to-[#909090] text-[#333]">
      <Panel label="Sketch" className="w-[160px] bg-white">
        <BigTool art="start2d" lines={["Start", "2D Sketch"]} className="ml-6 w-[108px]" />
        <Caret className="mt-[114px] h-2 w-2.5 text-[#333]" />
      </Panel>
      <Panel label="Create" className="w-[605px] bg-white">
        <BigTool art="extrude" lines={["Extrude"]} className="ml-1 w-[94px]" />
        <BigTool art="revolve" lines={["Revolve"]} className="mr-2.5 w-[93px]" />
        <Column className="w-[131px]" items={[["sweep", "Sweep"], ["loft", "Loft"], ["coil", "Coil"]]} />
        <Column className="w-36" items={[["emboss", "Emboss"], ["derive", "Derive"], ["rib", "Rib"]]} />
        <Column items={[["decal", "Decal"], ["import", "Import"]]} />
      </Panel>
      <Panel label="Modify" className="w-[727px] bg-white" caret>
        <BigTool art="hole" lines={["Hole"]} className="ml-1 w-[76px]" />
        <BigTool art="fillet" lines={["Fillet"]} className="mr-2.5 w-[76px]" />
        <Column className="w-[153px]" items={[["chamfer", "Chamfer"], ["shell", "Shell"], ["draft", "Draft"]]} />
        <Column className="w-[226px]" items={[["thread", "Thread"], ["combine", "Combine"], ["thicken", "Thicken/ Offset"]]} />
        <Column items={[["split", "Split"], ["direct", "Direct"], ["deleteFace", "Delete Face"]]} />
      </Panel>
      <Panel label="Work Features" className="w-[252px] bg-white">
        <BigTool art="plane" lines={["Plane"]} className="ml-4 mr-5 w-20" caret />
        <Column items={[["axis", "Axis", true], ["point", "Point", true], ["ucs", "UCS"]]} />
      </Panel>
      <Panel label="Pattern" className="w-[97px] bg-white">
        <div className="flex w-full flex-col items-center gap-1 pt-[7px]">
          <BoxedTool icon="rectPattern" label="Rectangular pattern" />
          <BoxedTool icon="circPattern" label="Circular pattern" />
          <BoxedTool icon="mirror" label="Mirror" />
        </div>
      </Panel>
      <Panel label="Create Freeform" className="w-[239px] bg-white">
        <BigTool art="box" lines={["Box"]} className="ml-2 mr-3 w-[76px]" caret />
        <Column items={[["face", "Face"], ["convert", "Convert"]]} />
      </Panel>
      <Panel label="Surface" className="w-[397px] bg-white">
        <Column className="ml-3.5 w-32" items={[["stitch", "Stitch"], ["patch", "Patch"], ["sculpt", "Sculpt"]]} />
        <Column className="w-[200px]" items={[["ruled", "Ruled Surface"], ["trim", "Trim"], ["extend", "Extend"]]} />
        <div className="flex flex-col gap-1 pt-[7px]">
          <BoxedTool icon="replaceFace" label="Replace face" />
          <BoxedTool icon="repair" label="Repair bodies" />
        </div>
      </Panel>
      <Panel label="Simulation" className="w-[136px] bg-white">
        <BigTool art="stress" lines={["Stress", "Analysis"]} className="w-full" />
      </Panel>
      <Panel label="Convert" className="w-[151px] bg-white">
        <BigTool art="sheet" lines={["Convert to", "Sheet Metal"]} className="w-full" />
      </Panel>
      <Panel label="" className="w-20 border-r-0 bg-white">
        <button aria-label="Ribbon options" className="ml-1 mt-[7px] flex h-11 w-[70px] items-center gap-3 border-2 border-[#cdcdcd] bg-[#f8f8f8] pl-1.5">
          <svg viewBox="0 0 32 32" className="size-8">
            <circle cx="16" cy="16" r="14" fill="#dfe2e6" stroke="#6e747c" strokeWidth="2" />
            <path d="M8 10H24L16 23Z" fill="#222a33" />
          </svg>
          <Caret />
        </button>
      </Panel>
    </div>
  );
}

// 16 x 16 browser icons
const treeIcons: Record<string, ReactNode> = {
  part: (
    <g stroke="#953a00" strokeLinejoin="round">
      <path d="M1 5 5 1H15V11L11 15H1Z" fill="#fff3b0" />
      <path d="M1 5H11V15H1Z" fill="#f7d91e" />
      <path d="M11 5 15 1V11L11 15Z" fill="#e0aa18" />
    </g>
  ),
  bodies: (
    <g stroke="#8d6a3d">
      <path d="M1 3 2 1H6L8 3H14V12H1Z" fill="#f6cd92" />
      <path d="M9 8H15V13L12 16H9Z" fill="#e5e8ee" stroke="#556" />
    </g>
  ),
  view: (
    <g fill="none" stroke="#222">
      <path d="M1 1H5M3 2V14H7M3 7H7M11 8H15" strokeDasharray="2 1" />
      <path d="M8 5H12M8 13H12" stroke="#2874bf" strokeWidth="2" />
    </g>
  ),
  folder: (
    <g stroke="#8d6a3d">
      <path d="M1 14V2H5L7 4H12V7" fill="#e0b878" />
      <path d="M1 14 5 7H15L10 14Z" fill="#f4d49b" />
    </g>
  ),
  plane: (
    <g stroke="#666">
      <path d="M5 1H15V11H5Z" fill="#e6e6e6" />
      <path d="M1 5H11V15H1Z" fill="#cdcdcd" fillOpacity=".8" />
      <path d="M5 5V11H11" fill="none" />
    </g>
  ),
  axis: (
    <g>
      <path d="M3 1H15V13H3Z" fill="#f2f2f4" stroke="#555" />
      <path d="M0 15 10 6" stroke="#aaa" strokeWidth="1.5" />
    </g>
  ),
  center: (
    <g fill="none" stroke="#aaa">
      <path d="M8 1V15M1 8H15M8 3 13 8 8 13 3 8Z" />
      <circle cx="8" cy="8" r="2" fill="#bbb" />
    </g>
  ),
  extrusion: (
    <g strokeLinejoin="round">
      <path d="M1 4 4 1H11V12L8 15H1Z" fill="#d09c10" stroke="#111" />
      <path d="M1 4H8V15H1Z" fill="#ffe12e" stroke="#111" />
      <path d="M1 4 4 1H11L8 4Z" fill="#5d9ade" stroke="#111" />
      <path d="M14 15V4" stroke="#d00" />
      <path d="M12 5 14 0 16 5Z" fill="#d00" />
    </g>
  ),
  sketch: (
    <g>
      <path d="M1 5H15V15H1Z" fill="#dde5f2" stroke="#334" />
      <path d="M4 13H13M5 7 9 12" stroke="#334" />
      <path d="M7 11 13 2 15 4 9 12Z" fill="#f5b52a" stroke="#865" strokeWidth=".5" />
      <path d="M1 1H6V3H5V6H2V3H1Z" fill="#f8954c" stroke="#a03c0c" strokeWidth=".7" />
    </g>
  ),
  workPlane: (
    <g>
      <path d="M6 1H15V10H6Z" fill="#c6d8ec" stroke="#111" />
      <path d="M1 5H11V15H1Z" fill="#f9ae72" stroke="#7a3108" />
    </g>
  ),
  end: (
    <g>
      <path d="M5 1H11L15 5V11L11 15H5L1 11V5Z" fill="#e8323c" stroke="#7a1015" />
      <path d="M5 5 11 11M11 5 5 11" stroke="#fff" strokeWidth="2" />
    </g>
  ),
};

type Node = { icon: string; label: string; toggle?: string; children?: Node[] };

const nodes: Node[] = [
  { icon: "bodies", label: "Solid Bodies(1)", toggle: "+" },
  { icon: "view", label: "View: Master", toggle: "+" },
  {
    icon: "folder",
    label: "Origin",
    toggle: "-",
    children: [
      { icon: "plane", label: "YZ Plane" },
      { icon: "plane", label: "XZ Plane" },
      { icon: "plane", label: "XY Plane" },
      { icon: "axis", label: "X Axis" },
      { icon: "axis", label: "Y Axis" },
      { icon: "axis", label: "Z Axis" },
      { icon: "center", label: "Center Point" },
    ],
  },
  { icon: "extrusion", label: "Extrusion1", toggle: "+" },
  { icon: "extrusion", label: "Extrusion2", toggle: "+" },
  { icon: "extrusion", label: "Extrusion3", toggle: "+" },
  { icon: "sketch", label: "Sketch4" },
  { icon: "workPlane", label: "Work Plane1" },
  { icon: "end", label: "End of Part" },
];

function TreeIcon({ name }: { name: string }) {
  return (
    <svg viewBox="0 0 16 16" className="size-4 shrink-0" aria-hidden="true">
      {treeIcons[name]}
    </svg>
  );
}

function branch(last: boolean, nested?: boolean) {
  if (nested) return last ? "M.5 0V15H12" : "M.5 0V30M0 15H12";
  return last ? "M8.5 0V15H20" : "M8.5 0V30M8 15H20";
}

function TreeRow({ node, last, nested }: { node: Node; last: boolean; nested?: boolean }) {
  return (
    <div className="flex h-[30px] items-center">
      {nested && <span className="ml-2 mr-[18px] h-full w-px shrink-0 bg-[#808080]" />}
      <svg viewBox="0 0 32 30" className="h-[30px] w-8 shrink-0" aria-hidden="true">
        <path d={branch(last, nested)} fill="none" stroke="#808080" />
        {node.toggle && (
          <g>
            <path d="M4.5 10.5H12.5V19.5H4.5Z" fill="#fff" stroke="#808080" />
            <path d={node.toggle === "+" ? "M6 15H11M8.5 12.5V17.5" : "M6 15H11"} stroke="#000" />
          </g>
        )}
      </svg>
      <TreeIcon name={node.icon} />
      <span className="ml-[3px] whitespace-nowrap">{node.label}</span>
    </div>
  );
}

function Browser() {
  return (
    <aside className="flex w-[242px] shrink-0 flex-col bg-[#f0f0f0] pr-[3px] font-['DejaVu_Sans_Condensed','Noto_Sans',sans-serif] text-black">
      <div className="flex h-[15px] items-center">
        <span className="h-[5px] w-[225px] border-y border-r border-[#999] bg-[#f8f8f8]" />
        <svg viewBox="0 0 8 8" className="ml-1 size-2"><path d="M1 1 7 7M7 1 1 7" stroke="#000" strokeWidth="2" /></svg>
      </div>
      <div className="flex h-[52px] items-center bg-[#ababab] pl-2 text-white">
        <h2 className="text-[23px] font-bold">Model</h2>
        <Caret className="ml-1 h-1.5 w-2 text-white" />
        <button aria-label="Help" className="ml-auto mr-2.5">
          <svg viewBox="0 0 30 30" className="size-[30px]">
            <path d="M4 4H29V27H23V31" fill="#777" />
            <path d="M2 1H26V25H22V29L17 25H2Z" fill="#fffde0" stroke="#000" strokeWidth="2" />
            <text x="14" y="21" textAnchor="middle" fontFamily="Liberation Sans" fontWeight="700" fontSize="22" fill="#10108c">?</text>
          </svg>
        </button>
      </div>
      <div className="flex h-7 items-center">
        <svg viewBox="0 0 60 28" className="h-7 w-[60px]">
          <path d="M4 8H16L12 13V18L8 19V13Z" fill="#999" stroke="#222" />
          <path d="M24.5 4V22" stroke="#888" />
          <path d="M34 19V13L37 7H40V10H42V7H45L49 13V19H43V15H40V19Z" fill="#000" />
          <path d="M36 14V17M46 14V17" stroke="#fff" />
        </svg>
      </div>
      <div className="mb-1 flex-1 overflow-hidden border-2 border-l-0 border-[#7a7a7a] bg-white text-[21px] leading-[30px]">
        <div className="flex h-[30px] items-center pl-[5px]">
          <TreeIcon name="part" />
          <span className="ml-[3px] whitespace-nowrap">MEM30033A-1-020--A</span>
        </div>
        {nodes.map((node, i) => (
          <div key={node.label}>
            <TreeRow node={node} last={i === nodes.length - 1} />
            {node.children?.map((child, j) => (
              <TreeRow key={child.label} node={child} last={j === node.children!.length - 1} nested />
            ))}
          </div>
        ))}
      </div>
    </aside>
  );
}

function Model() {
  return (
    <svg viewBox="272 474 2581 1044" className="absolute inset-0 h-full w-full" role="img" aria-label="Part model">
      <defs>
        <linearGradient id="inner" gradientUnits="userSpaceOnUse" x1="1581" y1="0" x2="1700" y2="0">
          <stop offset="0" stopColor="#565551" />
          <stop offset=".6" stopColor="#6e6d69" />
          <stop offset="1" stopColor="#82817b" />
        </linearGradient>
        <linearGradient id="riser" gradientUnits="userSpaceOnUse" x1="1563" y1="1103" x2="1528" y2="1042">
          <stop offset="0" stopColor="#5a5955" />
          <stop offset=".5" stopColor="#75746f" />
          <stop offset="1" stopColor="#82817b" />
        </linearGradient>
        <linearGradient id="floor" gradientUnits="userSpaceOnUse" x1="1563" y1="1103" x2="1590" y2="1150">
          <stop offset="0" stopColor="#92918f" />
          <stop offset=".5" stopColor="#b0afad" />
          <stop offset="1" stopColor="#bdbcba" />
        </linearGradient>
      </defs>
      <path d="M1766 891 2140 1106 1766 1073ZM1053 712 1121 718 1103 731V741Z" fill="#938b8d" />
      <path d="M1766 891 2140 1106 1662 1064M1121 718 1053 712" fill="none" stroke="#fbf21a" strokeWidth="1.5" />
      <g stroke="#45443f" strokeLinejoin="round">
        <path d="M1102 731 1471 943V1155L1655 1262V1475L1102 1155Z" fill="#acaba6" />
        <path d="M1581 795 1766 687V1114L1655 1050V837Z" fill="url(#inner)" />
        <path d="M1471 943 1655 837V1050L1471 1155Z" fill="url(#riser)" />
        <path d="M1471 1155 1655 1050 1839 1156 1655 1262Z" fill="url(#floor)" />
        <path d="M1655 1262 1839 1156V1368L1655 1475Z" fill="#82817b" />
        <path d="M1471 518 1766 687 1581 795 1655 837 1471 943 1102 731Z" fill="#bdbcba" />
      </g>
      <path d="M1102 731 1471 943V953L1102 740Z" fill="#a3907c" />
      <path d="M1471 944 1655 960V1050L1646 1055 1471 954Z" fill="#7e5f42" fillOpacity=".5" />
      <path d="M1655 925 1766 934V1073L1697 1067 1655 1050Z" fill="#7e5f42" fillOpacity=".5" />
      <path d="M1646 1055 1655 1050 1684 1067 1662 1064Z" fill="#a68a70" />
      <path d="M1053 712 1655 1060 1662 1064 1766 1073" fill="none" stroke="#f5ee22" strokeWidth="1.5" />
      <path d="M1655 837V1050" stroke="#45443f" />
      <path d="M1655 624 1766 687" stroke="#ffff00" strokeWidth="2" />
      <path d="M1471 518 1655 624 1287 837 1102 731Z" fill="none" stroke="#2f0080" strokeWidth="2" />
      <g fill="none" stroke="#111">
        <path d="M1102 731 1063 754M1287 837 1246 861M1287 837 1322 857" />
        <path d="M1655 624 1696 648" strokeDasharray="3 2" />
        <path d="M1069 751 1152 798M1168 808 1251 857M1689 645 1513 746M1497 756 1322 857" />
        <path d="M1069 751 1079 753 1076 758ZM1251 857 1241 855 1244 850ZM1689 645 1679 647 1682 652ZM1322 857 1332 855 1329 850Z" fill="#333" />
      </g>
      <g fontFamily="Open Sans" fontSize="13" fill="#222" textAnchor="middle">
        <text x="1160" y="808">25</text>
        <text x="1505" y="755">50</text>
      </g>
      <path d="M1561 782H1565V786H1561Z" fill="#ffff00" />

      {/* axis triad */}
      <path d="M323 1467V1450" stroke="#18a018" />
      <path d="M323 1467 338 1478" stroke="#a00000" />
      <path d="M323 1467 308 1478" stroke="#1010a0" />
      <path d="M323 1441 329 1453H317Z" fill="#0b910b" />
      <path d="M345 1479 339 1468 333 1480Z" fill="#b00808" />
      <path d="M302 1479 308 1468 314 1480Z" fill="#0808a8" />
      <g fontFamily="Liberation Sans" fontSize="12" textAnchor="middle">
        <text x="323" y="1440" fill="#36d436">Y</text>
        <text x="349" y="1486" fill="#e83a3a">X</text>
        <text x="298" y="1486" fill="#3a3ae8">Z</text>
      </g>
    </svg>
  );
}

function ViewCube() {
  return (
    <svg viewBox="0 0 80 90" className="absolute right-5 top-5 h-[90px] w-20" aria-label="View cube">
      <ellipse cx="40" cy="72" rx="34" ry="12" fill="#2b303b" opacity=".35" />
      <g stroke="#777b82">
        <path d="M40 5 76 21 40 42 4 21Z" fill="#9b9ea5" />
        <path d="M4 21 40 42V83L8 61Z" fill="#8e9198" />
        <path d="M76 21 40 42V83L72 61Z" fill="#898c93" />
      </g>
      <path d="M40 34 47 38V46L40 50 33 46V38Z" fill="#78849a" opacity=".4" />
      <g fontFamily="Liberation Sans" fontWeight="700" fontSize="11" fill="#5b5e66" textAnchor="middle">
        <text transform="matrix(.7 .3 -.4 .7 39 25)">TOP</text>
        <text transform="matrix(.6 .35 0 1 23 53)">FRONT</text>
        <text transform="matrix(.6 -.35 0 1 58 53)">RIGHT</text>
      </g>
    </svg>
  );
}

function NavBar() {
  return (
    <svg viewBox="0 0 34 200" className="absolute right-0 top-[120px] h-[200px] w-[34px]" aria-label="Navigation bar">
      <rect x="1" y="1" width="32" height="198" rx="4" fill="#757981" stroke="#3a3f4b" strokeWidth="2" />
      <circle cx="26" cy="8" r="4" fill="#555962" />
      <path d="M24 6 28 10M28 6 24 10" stroke="#ccc" />
      <path d="M17 23H28V33A11 11 0 1 1 17 23Z" fill="#b5b8bd" stroke="#555a63" />
      <circle cx="17" cy="34" r="6" fill="#a0a4ab" stroke="#555a63" />
      <path d="M14 55H20L17 58ZM14 117H20L17 120ZM14 151H20L17 154Z" fill="#50545d" />
      <path d="M4 62H30" stroke="#555a63" />
      <path d="M10 76 13 78 12 71 15 70 16 75 17 69 19 69 19 75 22 70 23 71 21 77 25 74 24 78 20 84H14Z" fill="#c3c6ca" stroke="#555a63" strokeWidth=".7" />
      <circle cx="16" cy="100" r="6" fill="#b5b8bd" stroke="#555a63" strokeWidth="1.5" />
      <path d="M14 97H17L19 99V104H14Z" fill="#e5e5e8" stroke="#555a63" strokeWidth=".7" />
      <path d="M20 105 25 109" stroke="#555a63" strokeWidth="3" />
      <g fill="none" stroke="#5a5e67">
        <ellipse cx="17" cy="135" rx="8" ry="4" />
        <ellipse cx="17" cy="135" rx="3" ry="8" />
      </g>
      <path d="M10 166H25V177H10ZM11 165 16 162 22 163" fill="#b5b8bd" stroke="#555a63" />
      <path d="M13 169H22V173H13Z" fill="#8c9098" stroke="#555a63" />
      <circle cx="26" cy="191" r="4" fill="#50545d" />
      <path d="M24 190H28L26 193Z" fill="#ccc" />
    </svg>
  );
}

function DocumentWindow() {
  return (
    <section className="flex flex-1 flex-col rounded-t-lg border border-b-2 border-r-2 border-black border-b-[#0b6f80] border-r-[#14b8d4] bg-[#bad0eb]">
      <div className="flex h-[57px] shrink-0 items-center rounded-t-lg bg-gradient-to-b from-[#9cb7d4] via-[#a0bad8] to-[#b9d0ea] pl-[13px] pr-3 pt-3 text-[#111]">
        <svg viewBox="0 0 16 16" className="size-8">{treeIcons.part}</svg>
        <h2 className="ml-1 flex-1 text-2xl">MEM30033A-1-020--A</h2>
        <div className="flex gap-0.5">
          <button aria-label="Minimize document" className="flex h-10 w-[68px] items-center justify-center rounded-sm border border-[#5b7190] bg-gradient-to-b from-[#bfd3ea] from-40% to-[#93aecd] to-40% pt-2">
            <svg viewBox="0 0 22 10" className="h-2.5 w-[22px]"><path d="M1 1H21V9H1Z" fill="#eee" stroke="#555" /></svg>
          </button>
          <button aria-label="Maximize document" className="flex h-10 w-[68px] items-center justify-center rounded-sm border border-[#5b7190] bg-gradient-to-b from-[#bfd3ea] from-40% to-[#93aecd] to-40%">
            <svg viewBox="0 0 22 18" className="h-[18px] w-[22px]">
              <path d="M1 1H21V17H1ZM7 6V12H16V6Z" fill="#eee" stroke="#555" fillRule="evenodd" />
            </svg>
          </button>
          <button aria-label="Close document" className="flex h-10 w-[68px] items-center justify-center rounded-sm border border-[#5a1420] bg-gradient-to-b from-[#e09588] from-40% to-[#b9432c] to-40%">
            <svg viewBox="0 0 22 18" className="h-[18px] w-[22px]">
              <path d="M1 1H7L11 5 15 1H21L14 9 21 17H15L11 13 7 17H1L8 9Z" fill="#f0f0f0" stroke="#5a4650" />
            </svg>
          </button>
        </div>
      </div>
      <div className="relative mx-3 mb-3 flex-1 overflow-hidden border-2 border-white border-l-[#7c838c] border-t-[#8c8c8c] bg-[linear-gradient(to_bottom,rgba(187,188,192,0)_58%,rgba(187,188,192,0.22)_72%,rgba(187,188,192,0.68)_84%,rgba(187,188,192,0.95)_100%),radial-gradient(ellipse_58%_125%_at_50%_52%,#a1aac2_0%,#97a2b9_28%,#8492a8_48%,#6b7487_66%,#515868_82%,#404652_100%)]">
        <Model />
        <ViewCube />
        <NavBar />
      </div>
    </section>
  );
}

function StatusBar() {
  return (
    <footer className="flex h-[46px] items-stretch bg-gradient-to-b from-white to-[#b0b0b0] text-black">
      <span className="-ml-0.5 flex-1 pt-3.5">Ready</span>
      <span className="w-10 border-l border-[#ccc] pt-3.5 text-center">1</span>
      <span className="w-[35px] border-l border-[#ccc] pt-3.5 text-center">1</span>
    </footer>
  );
}

function TaskButton({ label, active, children }: { label: string; active?: "open" | "focused"; children: ReactNode }) {
  return (
    <button aria-label={label} className={`flex h-20 w-24 shrink-0 flex-col items-center ${active === "focused" ? "bg-[#33373b]" : ""}`}>
      <span className="flex h-[76px] items-center pt-1">{children}</span>
      {active && <span className={`h-1 bg-[#76b9ed] ${active === "focused" ? "w-full" : "w-20"}`} />}
    </button>
  );
}

function Taskbar() {
  return (
    <footer className="flex h-20 items-center bg-[#000206] text-white">
      <button aria-label="Start" className="flex w-24 shrink-0 justify-center">
        <svg viewBox="0 0 32 32" className="size-8" fill="#fff">
          <path d="M0 4 13 2V15H0ZM14 2 32 0V15H14ZM0 16H13V30L0 28ZM14 16H32V32L14 30Z" />
        </svg>
      </button>
      <label className="flex h-20 w-[688px] shrink-0 items-center bg-[#f1f1f1] pl-[18px] pr-[30px]">
        <svg viewBox="0 0 44 44" className="size-11 shrink-0">
          <circle cx="22" cy="22" r="19.5" fill="none" stroke="#777" strokeWidth="4" />
          <circle cx="22" cy="22" r="17.5" fill="none" stroke="#000" strokeWidth="4" />
        </svg>
        <input aria-label="Type here to search" placeholder="Type here to search" className="ml-[18px] min-w-0 flex-1 text-[28px] placeholder:text-[#333]" />
        <svg viewBox="0 0 22 32" className="h-8 w-[22px] shrink-0" fill="none" stroke="#222" strokeWidth="2">
          <rect x="5" y="1" width="12" height="22" rx="3" />
          <path d="M1 15V22C1 25 4 27 7 27H15C18 27 21 25 21 22V15M11 27V31M6 31H16" />
        </svg>
      </label>
      <button aria-label="Task view" className="mr-1.5 flex w-24 shrink-0 justify-center">
        <svg viewBox="0 0 40 28" className="h-7 w-10" fill="none" stroke="#fff" strokeWidth="2">
          <path d="M9 1H31V27H9ZM5 5H1V23H5M35 5H39V23H35" />
        </svg>
      </button>
      <div className="flex flex-1 gap-0.5">
        <TaskButton label="Edge" active="open">
          <svg viewBox="0 0 40 42" className="h-[42px] w-10">
            <path d="M0 19C2 7 10 0 21 0 33 0 40 9 40 20V25H13C14 31 18 34 25 34 30 34 33 32 36 30V38C32 41 27 42 22 42 10 42 4 34 5 25 6 18 10 14 15 11 13 14 12 16 12 18H27C27 13 25 10 20 9 11 8 4 13 0 19Z" fill="#0078d7" />
          </svg>
        </TaskButton>
        <TaskButton label="File Explorer">
          <svg viewBox="0 0 42 34" className="h-[34px] w-[42px]">
            <path d="M0 0H18L21 3H42V33H0Z" fill="#ffe793" />
            <path d="M0 0H17L20 4 17 6H0Z" fill="#fdca2e" />
            <path d="M2 2H12V4H2Z" fill="#fff" />
            <path d="M2 2H4V4H2ZM7 34V19L9 17H33L35 19V34H28V24H14V34Z" fill="#3ab5e9" />
          </svg>
        </TaskButton>
        <TaskButton label="Store">
          <svg viewBox="0 0 48 46" className="h-[46px] w-12">
            <path d="M16 13C16 4 19 1 23 1S30 4 31 13M20 13C20 5 23 4 27 4S34 5 35 13" fill="none" stroke="#fff" strokeWidth="2" />
            <path d="M0 12H47V45H1Z" fill="#fff" />
            <path d="M14 19H23V28H14Z" fill="#f25022" />
            <path d="M24 19H33V28H24Z" fill="#7fba00" />
            <path d="M14 29H23V38H14Z" fill="#00a4ef" />
            <path d="M24 29H33V38H24Z" fill="#ffb900" />
          </svg>
        </TaskButton>
        <TaskButton label="Mail">
          <svg viewBox="0 0 48 38" className="h-[38px] w-12">
            <path d="M0 12 24 0 48 12V38H0Z" fill="#fff" />
            <path d="M1 12H47L28 22 40 33Z" fill="#000206" />
          </svg>
        </TaskButton>
        <TaskButton label="Inventor" active="focused">
          <svg viewBox="0 0 48 48" className="size-12">
            <path d="M0 0H48V48H0Z" fill="#eba864" />
            <path d="M0 0H48V17C30 22 10 18 0 6Z" fill="#fbead2" />
            <path d="M15 5H34V13H28V27H34V35H13V27H19V13H14Z" fill="#d07029" />
            <path d="M19 5 28 13V27L20 33 19 27Z" fill="#a44e18" />
            <path d="M22 39H48V48H22Z" fill="#fff4e6" />
            <text x="28" y="47" fontFamily="Liberation Sans" fontSize="9" fill="#444">PRO</text>
          </svg>
        </TaskButton>
      </div>
      <div className="flex items-center">
        <button aria-label="People">
          <svg viewBox="0 0 28 30" className="h-[30px] w-7" fill="none" stroke="#fff" strokeWidth="2">
            <circle cx="20" cy="6" r="5" />
            <path d="M14 14C18 9 26 11 27 18" />
            <circle cx="8" cy="17" r="5" />
            <path d="M1 30C1 20 15 20 15 30" />
          </svg>
        </button>
        <button aria-label="Show hidden icons" className="ml-11">
          <svg viewBox="0 0 26 16" className="h-4 w-[26px]" fill="none" stroke="#fff" strokeWidth="2"><path d="M1 15 13 2 25 15" /></svg>
        </button>
        <svg viewBox="0 0 30 18" className="ml-5 h-[18px] w-[30px]">
          <path d="M1 1H27V17H1Z" fill="none" stroke="#fff" strokeWidth="2" />
          <path d="M4 4H18V14H4ZM28 6H30V12H28Z" fill="#fff" />
        </svg>
        <svg viewBox="0 0 32 28" className="ml-4 h-7 w-8" fill="none" stroke="#fff" strokeWidth="2">
          <path d="M11 2H31V20H6M5 12V27M17 20V26M10 26H24M1 2H9V11H1ZM3 6H7" />
        </svg>
        <svg viewBox="0 0 34 30" className="ml-4 h-[30px] w-[34px]" fill="none" stroke="#fff" strokeWidth="2">
          <path d="M1 10H5L12 3V27L5 20H1ZM17 10C19 13 19 17 17 20M22 6C26 11 26 19 22 24M27 2C34 10 34 20 27 28" />
        </svg>
        <span className="ml-5 w-12">ENG</span>
        <div className="ml-4 w-[110px] text-center leading-9">
          <div>7:53 pm</div>
          <div>2/1/18</div>
        </div>
        <button aria-label="Notifications" className="ml-8">
          <svg viewBox="0 0 32 32" className="size-8" fill="none" stroke="#fff" strokeWidth="2"><path d="M1 1H31V25H21L16 31 11 25H1Z" /></svg>
        </button>
        <span className="ml-10 mr-2 h-20 w-0.5 bg-[#666]" />
      </div>
    </footer>
  );
}

export default function App() {
  return (
    <div className="flex min-h-screen flex-col bg-black py-32 font-['Open_Sans','Noto_Sans',sans-serif] text-[22px] leading-7">
      <TitleBar />
      <TabBar />
      <Ribbon />
      <main className="relative flex flex-1">
        <Browser />
        <div className="flex flex-1 border-b-4 border-l-2 border-r-4 border-[#66666a] bg-gradient-to-b from-white to-[#a0a0a5] pb-2 pl-[13px] pr-[7px] pt-3">
          <DocumentWindow />
        </div>
        <div className="pointer-events-none absolute bottom-[22px] left-[80%] whitespace-nowrap text-[#a3a4a5]">
          <p className="text-[38px] leading-[50px]">Activate Windows</p>
          <p className="text-[27px] leading-10">Go to Settings to activate Windows.</p>
        </div>
      </main>
      <StatusBar />
      <Taskbar />
    </div>
  );
}
